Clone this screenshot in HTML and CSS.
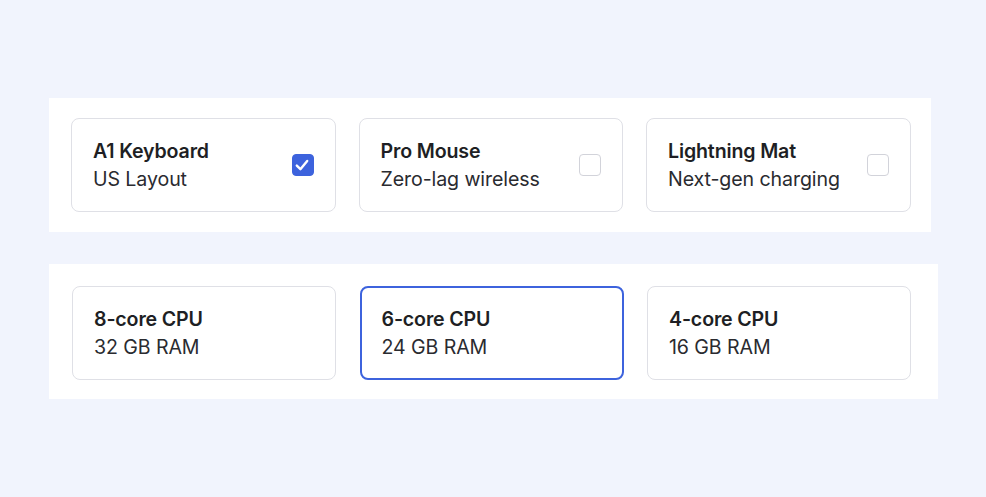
FILE: index.html
```html
<!DOCTYPE html>
<html lang="en">
<head>
<meta charset="utf-8">
<title>Options</title>
<link rel="stylesheet" href="styles.css">
</head>
<body>
<main class="page">
  <section class="panel panel-checks">
    <label class="card">
      <span class="card-text">
        <span class="card-title">A1 Keyboard</span>
        <span class="card-sub">US Layout</span>
      </span>
      <span class="box box-on">
        <svg viewBox="0 0 22 22" width="22" height="22" aria-hidden="true"><path d="M5.8 11.6 L9.4 15.2 L16.2 6.9" fill="none" stroke="#fff" stroke-width="2.4" stroke-linecap="round" stroke-linejoin="round"/></svg>
      </span>
    </label>
    <label class="card">
      <span class="card-text">
        <span class="card-title">Pro Mouse</span>
        <span class="card-sub">Zero-lag wireless</span>
      </span>
      <span class="box"></span>
    </label>
    <label class="card">
      <span class="card-text">
        <span class="card-title">Lightning Mat</span>
        <span class="card-sub">Next-gen charging</span>
      </span>
      <span class="box"></span>
    </label>
  </section>

  <section class="panel panel-radios">
    <div class="card">
      <span class="card-text">
        <span class="card-title">8-core CPU</span>
        <span class="card-sub">32 GB RAM</span>
      </span>
    </div>
    <div class="card card-selected">
      <span class="card-text">
        <span class="card-title">6-core CPU</span>
        <span class="card-sub">24 GB RAM</span>
      </span>
    </div>
    <div class="card">
      <span class="card-text">
        <span class="card-title">4-core CPU</span>
        <span class="card-sub">16 GB RAM</span>
      </span>
    </div>
  </section>
</main>
</body>
</html>
```

FILE: styles.css
```css
* { box-sizing: border-box; }
html, body {
  margin: 0;
  padding: 0;
  background: #f1f4fd;
}
body {
  font-family: Inter, "Liberation Sans", sans-serif;
  color: #1e1f24;
  width: 986px;
  height: 497px;
  overflow: hidden;
}
.page {
  padding: 98px 0 0 49px;
  display: flex;
  flex-direction: column;
  align-items: flex-start;
  gap: 32px;
}
.panel {
  background: #ffffff;
  display: flex;
}
.panel-checks {
  padding: 20px 20.5px 20px 22px;
  gap: 23px;
}
.panel-radios {
  padding: 22px 27px 19px 23px;
  gap: 23.5px;
}
.card {
  width: 264.5px;
  height: 94px;
  border: 1px solid #dfe0e6;
  border-radius: 8px;
  background: #fff;
  display: flex;
  align-items: center;
  justify-content: space-between;
  padding: 0 21px 1px 21px;
}
.panel-radios .card { width: 264px; }
.card-selected {
  border: 2px solid #3d63dd;
  padding: 0 20px 1px 20px;
}
.card-text {
  display: flex;
  flex-direction: column;
}
.card-title {
  font-size: 19.6px;
  font-weight: 600;
  line-height: 28px;
  letter-spacing: -0.15px;
}
.card-sub {
  font-size: 19.6px;
  font-weight: 400;
  line-height: 28px;
  color: #2a2b30;
  letter-spacing: -0.1px;
}
.box {
  width: 22px;
  height: 22px;
  border: 1.5px solid #d2d3da;
  border-radius: 4px;
  background: #fff;
  flex: none;
  display: block;
  margin-top: 1px;
}
.box-on {
  background: #3d63dd;
  border-color: #3d63dd;
  position: relative;
}
.box-on svg {
  position: absolute;
  left: -1.5px;
  top: -1.5px;
}
```
